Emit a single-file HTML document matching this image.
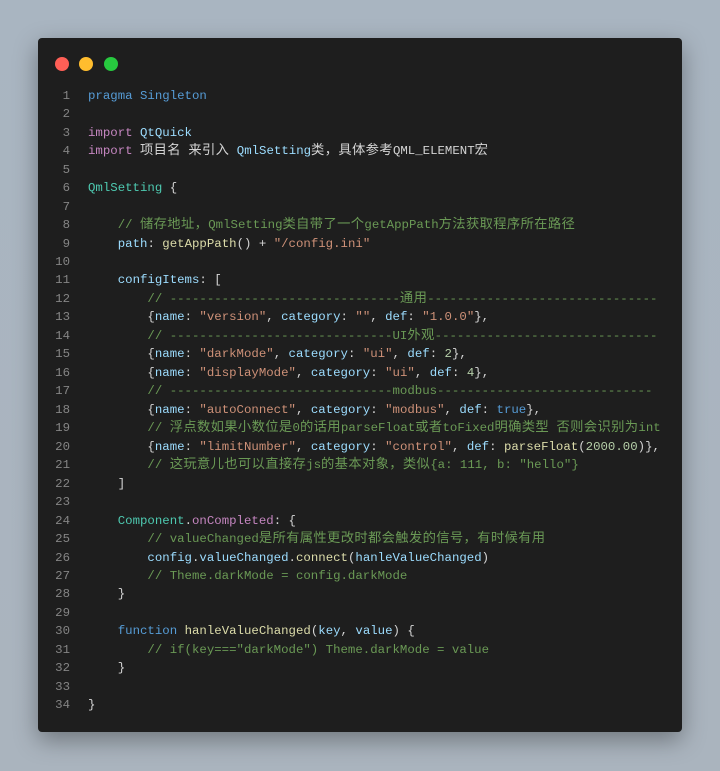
<!DOCTYPE html>
<html><head><meta charset="utf-8"><style>
html,body{margin:0;padding:0}
body{width:720px;height:771px;background:linear-gradient(180deg,#a9b5c1,#aab4be);position:relative;overflow:hidden}
.win{position:absolute;left:38px;top:38px;width:644px;height:694px;background:#1e1e1e;border-radius:4px;box-shadow:0 8px 24px rgba(0,0,0,.35)}
.dot{position:absolute;top:19px;width:14px;height:14px;border-radius:50%}
.code{position:absolute;left:0;top:48.8px;font-family:"Liberation Mono","Noto Sans CJK SC",monospace;font-size:12.38px;line-height:18.48px;color:#d4d4d4;white-space:pre}
.code > div{height:18.48px;overflow:visible}
.ln{display:inline-block;width:32px;text-align:right;color:#858585;margin-right:18px}
.c{font-family:"Noto Sans CJK SC",sans-serif;font-size:13.3px;letter-spacing:.35px;line-height:0}
.k{color:#c586c0}.b{color:#569cd6}.t{color:#4ec9b0}.p{color:#9cdcfe}.s{color:#ce9178}.m{color:#6a9955}.f{color:#dcdcaa}.n{color:#b5cea8}
</style></head><body>
<div class="win">
<div class="dot" style="left:17px;background:#ff5f56"></div>
<div class="dot" style="left:41px;background:#ffbd2e"></div>
<div class="dot" style="left:66px;background:#27c93f"></div>
<div class="code"><div><span class="ln">1</span><span class="b">pragma Singleton</span></div><div><span class="ln">2</span></div><div><span class="ln">3</span><span class="k">import</span> <span class="p">QtQuick</span></div><div><span class="ln">4</span><span class="k">import</span> <span class="c">项目名</span> <span class="c">来引入</span> <span class="p">QmlSetting</span><span class="c">类，具体参考</span>QML_ELEMENT<span class="c">宏</span></div><div><span class="ln">5</span></div><div><span class="ln">6</span><span class="t">QmlSetting</span> {</div><div><span class="ln">7</span></div><div><span class="ln">8</span>    <span class="m">// <span class="c">储存地址，</span>QmlSetting<span class="c">类自带了一个</span>getAppPath<span class="c">方法获取程序所在路径</span></span></div><div><span class="ln">9</span>    <span class="p">path</span>: <span class="f">getAppPath</span>() + <span class="s">"/config.ini"</span></div><div><span class="ln">10</span></div><div><span class="ln">11</span>    <span class="p">configItems</span>: [</div><div><span class="ln">12</span>        <span class="m">// -------------------------------<span class="c">通用</span>-------------------------------</span></div><div><span class="ln">13</span>        {<span class="p">name</span>: <span class="s">"version"</span>, <span class="p">category</span>: <span class="s">""</span>, <span class="p">def</span>: <span class="s">"1.0.0"</span>},</div><div><span class="ln">14</span>        <span class="m">// ------------------------------UI<span class="c">外观</span>------------------------------</span></div><div><span class="ln">15</span>        {<span class="p">name</span>: <span class="s">"darkMode"</span>, <span class="p">category</span>: <span class="s">"ui"</span>, <span class="p">def</span>: <span class="n">2</span>},</div><div><span class="ln">16</span>        {<span class="p">name</span>: <span class="s">"displayMode"</span>, <span class="p">category</span>: <span class="s">"ui"</span>, <span class="p">def</span>: <span class="n">4</span>},</div><div><span class="ln">17</span>        <span class="m">// ------------------------------modbus-----------------------------</span></div><div><span class="ln">18</span>        {<span class="p">name</span>: <span class="s">"autoConnect"</span>, <span class="p">category</span>: <span class="s">"modbus"</span>, <span class="p">def</span>: <span class="b">true</span>},</div><div><span class="ln">19</span>        <span class="m">// <span class="c">浮点数如果小数位是</span>0<span class="c">的话用</span>parseFloat<span class="c">或者</span>toFixed<span class="c">明确类型</span> <span class="c">否则会识别为</span>int</span></div><div><span class="ln">20</span>        {<span class="p">name</span>: <span class="s">"limitNumber"</span>, <span class="p">category</span>: <span class="s">"control"</span>, <span class="p">def</span>: <span class="f">parseFloat</span>(<span class="n">2000.00</span>)},</div><div><span class="ln">21</span>        <span class="m">// <span class="c">这玩意儿也可以直接存</span>js<span class="c">的基本对象，类似</span>{a: 111, b: "hello"}</span></div><div><span class="ln">22</span>    ]</div><div><span class="ln">23</span></div><div><span class="ln">24</span>    <span class="t">Component</span>.<span class="k">onCompleted</span>: {</div><div><span class="ln">25</span>        <span class="m">// valueChanged<span class="c">是所有属性更改时都会触发的信号，有时候有用</span></span></div><div><span class="ln">26</span>        <span class="p">config</span>.<span class="p">valueChanged</span>.<span class="f">connect</span>(<span class="p">hanleValueChanged</span>)</div><div><span class="ln">27</span>        <span class="m">// Theme.darkMode = config.darkMode</span></div><div><span class="ln">28</span>    }</div><div><span class="ln">29</span></div><div><span class="ln">30</span>    <span class="b">function</span> <span class="f">hanleValueChanged</span>(<span class="p">key</span>, <span class="p">value</span>) {</div><div><span class="ln">31</span>        <span class="m">// if(key==="darkMode") Theme.darkMode = value</span></div><div><span class="ln">32</span>    }</div><div><span class="ln">33</span></div><div><span class="ln">34</span>}</div></div>
</div>
</body></html>
